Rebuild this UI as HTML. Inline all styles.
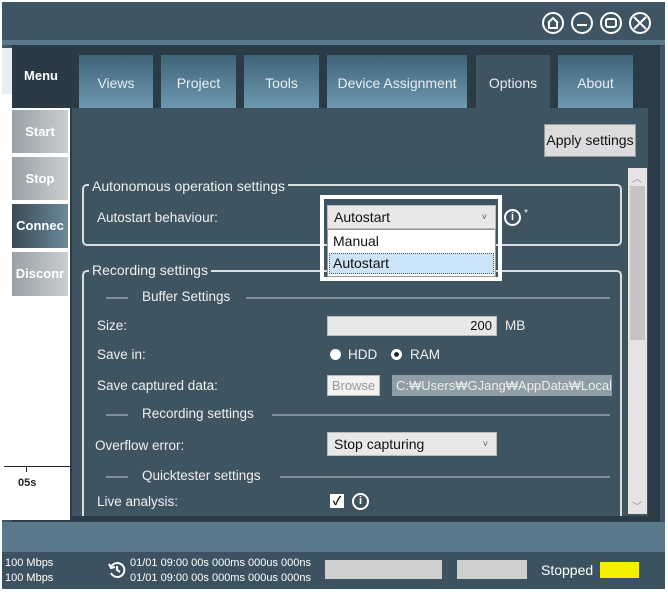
<!DOCTYPE html>
<html><head><style>
*{margin:0;padding:0;box-sizing:border-box}
body{width:668px;height:592px;background:#fff;font-family:"Liberation Sans","Noto Sans CJK KR",sans-serif;position:relative;overflow:hidden;color:#fff;font-size:13px}
.a{position:absolute}
.tab{position:absolute;top:55px;height:53px;background:linear-gradient(#3f6378,#6e98b0);color:#e8eef2;font-size:14px;text-align:center;line-height:56px}
.side{position:absolute;left:12px;width:56px;font-weight:bold;font-size:13px;text-align:center;color:#fff}
.gray{background:linear-gradient(90deg,#9aa2a7,#c8cdd0)}
.line{position:absolute;height:2px;background:#7d8e98}
.lbl{position:absolute;font-size:13.5px;color:#f0f0f0}
.box{position:absolute;background:#e8e8e8;color:#111;border:1px solid #bbb}
</style></head><body>
<div class="a" style="left:2px;top:2px;width:663px;height:587px;background:#405563"></div>
<div class="a" style="left:2px;top:40px;width:663px;height:5px;background:#5a7a8c"></div>
<svg class="a" style="left:540px;top:10px" width="118" height="26" viewBox="0 0 118 26" fill="none" stroke="#fff" stroke-width="2">
<circle cx="13" cy="13" r="10"/><path d="M8 13 L13 8 L18 13 M9 12 V18 H17 V12"/>
<circle cx="42" cy="13" r="10"/><path d="M37 15 H47"/>
<circle cx="71" cy="13" r="10"/><rect x="66" y="9" width="10" height="8" rx="2"/>
<circle cx="100" cy="13" r="10"/><path d="M94 7 L106 19 M106 7 L94 19"/>
</svg>
<div class="a" style="left:12px;top:45px;width:648px;height:477px;background:#2c3c47"></div>
<div class="a" style="left:2px;top:48px;width:10px;height:46px;background:#e8eef5"></div>
<div class="a" style="left:2px;top:94px;width:68px;height:426px;background:#fff"></div>
<div class="a" style="left:4px;top:466px;width:66px;height:1px;background:#222"></div>
<div class="a" style="left:26px;top:466px;width:1px;height:6px;background:#222"></div>
<div class="a" style="left:18px;top:477px;color:#222;font-size:11px;font-weight:bold">05s</div>
<div class="side" style="top:48px;height:60px;background:#2a3a44;line-height:56px;width:58px">Menu</div>
<div class="side gray" style="top:110px;height:43px;line-height:43px">Start</div>
<div class="side gray" style="top:157px;height:43px;line-height:43px">Stop</div>
<div class="side" style="top:204px;height:44px;line-height:44px;background:linear-gradient(90deg,#3a4a54,#6a8a9c)">Connec</div>
<div class="side gray" style="top:252px;height:44px;line-height:44px;overflow:hidden">Disconr</div>
<div class="a" style="left:72px;top:108px;width:576px;height:408px;background:#3f5461"></div>
<div class="tab" style="left:79px;width:74px">Views</div>
<div class="tab" style="left:161px;width:75px">Project</div>
<div class="tab" style="left:244px;width:75px">Tools</div>
<div class="tab" style="left:327px;width:140px">Device Assignment</div>
<div class="tab" style="left:476px;width:74px;background:#3f5461">Options</div>
<div class="tab" style="left:558px;width:75px">About</div>
<div class="box" style="left:544px;top:124px;width:92px;height:33px;background:#dcdcdc;font-size:14px;line-height:31px;text-align:center;border-color:#999">Apply settings</div>
<div class="a" style="left:628px;top:168px;width:19px;height:346px;background:#e4e4e4"></div>
<div class="a" style="left:630px;top:186px;width:15px;height:154px;background:#c4c4c4"></div>
<div class="a" style="left:632px;top:170px;color:#888;font-size:10px">︿</div>
<div class="a" style="left:632px;top:498px;color:#888;font-size:10px">﹀</div>
<div class="a" style="left:82px;top:184px;width:540px;height:62px;border:2px solid #d8dde0;border-radius:5px"></div>
<div class="lbl" style="left:89px;top:178px;background:#3f5461;padding:0 3px;font-size:14px">Autonomous operation settings</div>
<div class="lbl" style="left:97px;top:210px">Autostart behaviour:</div>
<div class="a" style="left:504px;top:209px;width:17px;height:17px;border:2px solid #fff;border-radius:50%;font-size:11px;font-weight:bold;text-align:center;line-height:13px">i</div>
<div class="a" style="left:524px;top:208px;font-size:10px">*</div>
<div class="a" style="left:82px;top:270px;width:540px;height:260px;border:2px solid #d8dde0;border-radius:5px"></div>
<div class="lbl" style="left:89px;top:262px;background:#3f5461;padding:0 3px;font-size:14px">Recording settings</div>
<div class="line" style="left:106px;top:297px;width:22px"></div><div class="lbl" style="left:142px;top:289px">Buffer Settings</div><div class="line" style="left:246px;top:297px;width:364px"></div>
<div class="lbl" style="left:97px;top:318px">Size:</div>
<div class="box" style="left:327px;top:316px;width:170px;height:20px;text-align:right;padding-right:4px;line-height:18px">200</div>
<div class="lbl" style="left:505px;top:318px">MB</div>
<div class="lbl" style="left:97px;top:347px">Save in:</div>
<div class="a" style="left:330px;top:349px;width:11px;height:11px;border-radius:50%;background:#fff"></div>
<div class="lbl" style="left:348px;top:347px">HDD</div>
<div class="a" style="left:391px;top:349px;width:11px;height:11px;border-radius:50%;background:#fff;border:3px solid #fff;box-shadow:inset 0 0 0 3px #222"></div>
<div class="lbl" style="left:410px;top:347px">RAM</div>
<div class="lbl" style="left:97px;top:378px">Save captured data:</div>
<div class="box" style="left:327px;top:375px;width:53px;height:21px;color:#999;background:#f2f2f2;text-align:center;line-height:19px">Browse</div>
<div class="box" style="left:392px;top:375px;width:220px;height:21px;background:#8e9da6;color:#eee;border-color:#8e9da6;line-height:19px;padding-left:3px;overflow:hidden;white-space:nowrap">C:₩Users₩GJang₩AppData₩Local₩</div>
<div class="line" style="left:106px;top:414px;width:22px"></div><div class="lbl" style="left:142px;top:406px">Recording settings</div><div class="line" style="left:272px;top:414px;width:338px"></div>
<div class="lbl" style="left:95px;top:438px">Overflow error:</div>
<div class="box" style="left:327px;top:432px;width:170px;height:24px;line-height:22px;padding-left:6px;font-size:14px">Stop capturing<span style="position:absolute;right:8px;font-size:9px;color:#555">˅</span></div>
<div class="line" style="left:106px;top:476px;width:22px"></div><div class="lbl" style="left:142px;top:468px">Quicktester settings</div><div class="line" style="left:280px;top:476px;width:330px"></div>
<div class="lbl" style="left:97px;top:494px">Live analysis:</div>
<div class="a" style="left:330px;top:494px;width:14px;height:14px;background:#fff;color:#111;font-size:12px;line-height:14px;text-align:center;font-weight:bold">✓</div>
<div class="a" style="left:352px;top:493px;width:17px;height:17px;border:2px solid #fff;border-radius:50%;font-size:11px;font-weight:bold;text-align:center;line-height:13px">i</div>
<div class="a" style="left:72px;top:516px;width:588px;height:6px;background:#2c3c47"></div>
<div class="a" style="left:2px;top:522px;width:663px;height:30px;background:#5a7a8c"></div>
<div class="a" style="left:320px;top:195px;width:182px;height:86px;border:4px solid #fff"></div>
<div class="box" style="left:327px;top:205px;width:169px;height:24px;line-height:22px;padding-left:6px;font-size:14px">Autostart<span style="position:absolute;right:8px;font-size:9px;color:#555">˅</span></div>
<div class="a" style="left:327px;top:229px;width:169px;height:48px;background:#fff;border:1px solid #999"></div>
<div class="a" style="left:333px;top:233px;color:#111;font-size:14px">Manual</div>
<div class="a" style="left:329px;top:253px;width:165px;height:21px;background:#cce4f7;border:1px dotted #555;color:#111;font-size:14px;padding-left:3px;line-height:19px">Autostart</div>
<div class="a" style="left:2px;top:552px;width:663px;height:37px;background:#3d5260"></div>
<div class="a" style="left:5px;top:556px;font-size:11px;line-height:15px">100 Mbps<br>100 Mbps</div>
<svg class="a" style="left:108px;top:561px" width="18" height="18" viewBox="0 0 18 18" fill="none" stroke="#fff" stroke-width="2"><path d="M3 6 A7 7 0 1 1 3 12"/><path d="M1 3 L3 7 L7 6"/><path d="M9 5 V9 L12 11"/></svg>
<div class="a" style="left:130px;top:556px;font-size:11px;line-height:15px">01/01 09:00 00s 000ms 000us 000ns<br>01/01 09:00 00s 000ms 000us 000ns</div>
<div class="a" style="left:325px;top:560px;width:117px;height:19px;background:#cfcfcf"></div>
<div class="a" style="left:457px;top:560px;width:70px;height:19px;background:#cfcfcf"></div>
<div class="a" style="left:541px;top:562px;font-size:14px">Stopped</div>
<div class="a" style="left:600px;top:562px;width:39px;height:16px;background:#f4f000"></div>
</body></html>
